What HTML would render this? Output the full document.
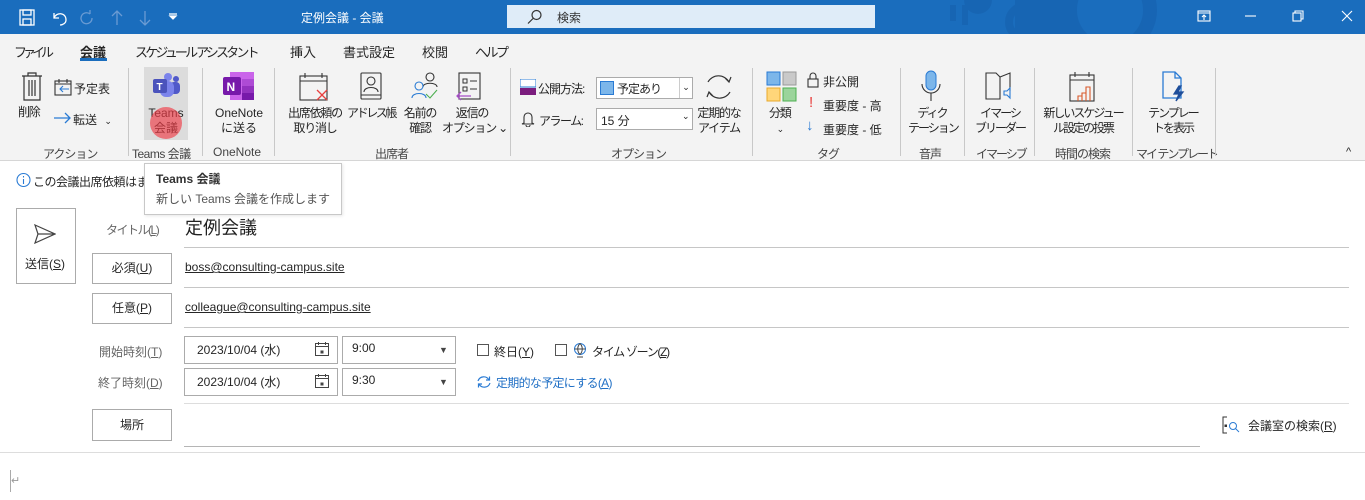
<!DOCTYPE html>
<html><head><meta charset="utf-8">
<style>
*{box-sizing:border-box;margin:0;padding:0}
body{width:1365px;height:500px;overflow:hidden;background:#fff;font-family:"Liberation Sans","Noto Sans CJK JP",sans-serif;color:#262626;font-size:12px;position:relative}
.a{position:absolute;white-space:nowrap}
#tb{left:0;top:0;width:1365px;height:34px;background:#1a6dbd}
#mb{left:0;top:34px;width:1365px;height:127px;background:#f3f3f3;border-bottom:1px solid #d6d6d6}
.menu{top:42px;font-size:13px;color:#262626}
.gl{top:145px;font-size:12px;color:#444;letter-spacing:-1px}
.sep{top:68px;width:1px;height:88px;background:#c8c8c8}
.lbl{font-size:12px;text-align:center;line-height:15px;color:#262626;letter-spacing:-1.2px}
.btn{border:1px solid #ababab;background:#fff;font-size:12px;text-align:center;color:#262626}
.ln{height:1px;background:#c6c6c6}
.f{color:#666;font-size:12px}
.box{border:1px solid #ababab;background:#fff}
u{text-decoration:underline}
</style></head><body>
<div id="tb" class="a"></div>
<svg class="a" style="left:900px;top:0" width="400" height="34"><g fill="#1763b0" opacity=".7"><rect x="50" y="5" width="6" height="16"/><rect x="62" y="5" width="6" height="20"/><rect x="115" y="0" width="60" height="34"/><circle cx="78" cy="0" r="14"/><circle cx="125" cy="22" r="16" fill="none" stroke="#1763b0" stroke-width="8"/><circle cx="210" cy="10" r="40" fill="none" stroke="#1763b0" stroke-width="14"/></g></svg>
<svg class="a" style="left:18px;top:8px" width="170" height="20" fill="none" stroke="#fff" stroke-width="1.3"><rect x="2" y="2" width="14" height="15"/><rect x="5" y="2" width="8" height="5"/><rect x="5" y="11" width="8" height="6"/><path d="M36 5v5h5M36 10c2-6 12-6 12 2c0 3-3 5-6 5"/><path d="M72 6a5.5 5.5 0 1 0 2 4M72 6l0-4" stroke="#6a9bd3"/><path d="M99 17V3M94 8l5-5l5 5M127 3v14M122 12l5 5l5-5" stroke="#6a9bd3"/><path d="M152 8h6l-3 3z" fill="#fff"/><path d="M151 6h8"/></svg>
<div class="a" style="left:301px;top:9px;color:#fff;font-size:12px">定例会議 - 会議</div>
<div class="a" style="left:507px;top:5px;width:368px;height:23px;background:#dfecf8"></div>
<svg class="a" style="left:527px;top:9px" width="16" height="16" fill="none" stroke="#333" stroke-width="1.2"><circle cx="9.5" cy="6" r="4.5"/><path d="M6 9.5L1 14.5"/></svg>
<div class="a" style="left:557px;top:9px;font-size:12px;color:#333">検索</div>
<svg class="a" style="left:1190px;top:8px" width="170" height="18" fill="none" stroke="#fff" stroke-width="1.1"><rect x="8" y="3" width="12" height="10"/><path d="M8 5h12M14 12V7M12 9l2-2l2 2"/><path d="M55 8h11"/><rect x="103" y="5" width="8" height="8"/><path d="M105 5V3h8v8h-2"/><path d="M152 3l10 10M162 3l-10 10"/></svg>
<div id="mb" class="a"></div>
<div class="a menu" style="left:14px;letter-spacing:-4px">ファイル</div>
<div class="a menu" style="left:80px;font-weight:bold">会議</div>
<div class="a" style="left:80px;top:58px;width:27px;height:3px;background:#1a6dbd"></div>
<div class="a menu" style="left:135px;letter-spacing:-2.8px">スケジュール アシスタント</div>
<div class="a menu" style="left:290px">挿入</div>
<div class="a menu" style="left:343px">書式設定</div>
<div class="a menu" style="left:422px">校閲</div>
<div class="a menu" style="left:475px;letter-spacing:-2.5px">ヘルプ</div>
<!-- action group -->
<svg class="a" style="left:20px;top:72px" width="24" height="30" fill="none" stroke="#333" stroke-width="1.2"><path d="M2 4h20M8 4V1h8v3M4 4v24h16V4M9 8v16M12 8v16M15 8v16"/></svg>
<div class="a lbl" style="left:18px;top:105px">削除</div>
<svg class="a" style="left:54px;top:79px" width="20" height="18" fill="none" stroke="#333" stroke-width="1.1"><rect x="1" y="2" width="16" height="14"/><path d="M1 5h16M5 0v4M13 0v4"/><path d="M15 10H6M9 7l-3 3l3 3" stroke="#2a7bd4"/></svg>
<div class="a" style="left:74px;top:80px;font-size:12px">予定表</div>
<svg class="a" style="left:53px;top:112px" width="20" height="12" fill="none" stroke="#2a7bd4" stroke-width="1.3"><path d="M1 6h16M12 1l5 5l-5 5"/></svg>
<div class="a" style="left:73px;top:111px;font-size:12px">転送 <span style="font-size:9px;margin-left:4px">⌄</span></div>
<div class="a gl" style="left:43px">アクション</div>
<div class="a sep" style="left:128px"></div>
<!-- teams -->
<div class="a" style="left:144px;top:67px;width:44px;height:73px;background:#dcdcdc"></div>
<svg class="a" style="left:151px;top:71px" width="30" height="28"><circle cx="17" cy="6" r="4" fill="#7b83eb"/><circle cx="25" cy="8" r="3" fill="#5059c9"/><rect x="19" y="11" width="10" height="12" rx="4" fill="#5059c9"/><rect x="9" y="10" width="14" height="16" rx="6" fill="#7b83eb"/><rect x="2" y="8" width="14" height="14" rx="2" fill="#4b53bc"/><text x="5.5" y="19" fill="#fff" font-size="10" font-weight="bold" font-family="Liberation Sans">T</text></svg>
<div class="a lbl" style="left:144px;top:106px;width:44px;letter-spacing:0">Teams<br>会議</div>
<div class="a" style="left:150px;top:107px;width:32px;height:32px;border-radius:50%;background:rgba(240,60,70,.65)"></div>
<div class="a gl" style="left:132px;letter-spacing:-.5px">Teams 会議</div>
<div class="a sep" style="left:202px"></div>
<!-- onenote -->
<svg class="a" style="left:222px;top:71px" width="34" height="30"><rect x="8" y="1" width="24" height="28" fill="#ca64ea"/><rect x="20" y="8" width="12" height="7" fill="#ae4bd5"/><rect x="20" y="15" width="12" height="7" fill="#9332bf"/><rect x="20" y="22" width="12" height="7" fill="#7719aa"/><rect x="1" y="6" width="18" height="18" rx="2" fill="#7719aa"/><text x="4.5" y="20" fill="#fff" font-size="12" font-weight="bold" font-family="Liberation Sans">N</text></svg>
<div class="a lbl" style="left:208px;top:106px;width:62px;letter-spacing:0">OneNote<br>に送る</div>
<div class="a gl" style="left:213px;letter-spacing:0">OneNote</div>
<div class="a sep" style="left:274px"></div>
<!-- attendees -->
<svg class="a" style="left:299px;top:72px" width="220" height="30" fill="none" stroke="#333" stroke-width="1.1"><rect x="1" y="4" width="27" height="24"/><path d="M1 9h27M6 1v5M23 1v5"/><path d="M18 18l10 10M28 18L18 28" stroke="#e8403e" stroke-width="1.3"/><rect x="62" y="1" width="20" height="26" rx="1"/><path d="M62 23h20"/><circle cx="72" cy="9" r="4"/><path d="M65 20c0-6 14-6 14 0"/><circle cx="131" cy="5" r="4"/><path d="M124 15c0-5 14-5 14 0"/><circle cx="120" cy="14" r="4" stroke="#2a7bd4"/><path d="M113 26c0-6 14-6 14 0" stroke="#2a7bd4"/><path d="M127 22l4 4l7-8" stroke="#4caf50"/><rect x="160" y="1" width="21" height="26"/><path d="M164 7h4v4h-4zM164 15h4v4h-4zM171 9h7M171 17h7" stroke-width="1"/><path d="M172 24h-14M162 20l-4 4l4 4" stroke="#a64fc7" stroke-width="1.3"/></svg>
<div class="a lbl" style="left:285px;top:106px;width:60px">出席依頼の<br>取り消し</div>
<div class="a lbl" style="left:347px;top:106px;width:48px;letter-spacing:-2.4px">アドレス帳</div>
<div class="a lbl" style="left:403px;top:106px;width:34px">名前の<br>確認</div>
<div class="a lbl" style="left:442px;top:106px;width:60px">返信の<br>オプション ⌄</div>
<div class="a gl" style="left:375px">出席者</div>
<div class="a sep" style="left:510px"></div>
<!-- options -->
<svg class="a" style="left:520px;top:79px" width="16" height="16"><rect x="0" y="0" width="16" height="8" fill="#fff" stroke="#2a7bd4"/><rect x="0" y="9" width="16" height="7" fill="#7b1d7e"/></svg>
<div class="a" style="left:538px;top:80px;letter-spacing:-1px">公開方法:</div>
<div class="a box" style="left:596px;top:77px;width:97px;height:22px"></div>
<div class="a" style="left:600px;top:81px;width:14px;height:14px;background:#7cb6ea;border:1px solid #2a7bd4"></div>
<div class="a" style="left:617px;top:80px;letter-spacing:-1px">予定あり</div>
<div class="a" style="left:679px;top:78px;height:20px;border-left:1px solid #ccc;width:13px;font-size:9px;text-align:center;line-height:18px">⌄</div>
<svg class="a" style="left:521px;top:111px" width="14" height="16" fill="none" stroke="#333" stroke-width="1.1"><path d="M3 12V6a4 4 0 0 1 8 0v6l2 1H1zM5 14a2 2 0 0 0 4 0"/></svg>
<div class="a" style="left:539px;top:112px;letter-spacing:-1.5px">アラーム:</div>
<div class="a box" style="left:596px;top:108px;width:97px;height:22px"></div>
<div class="a" style="left:601px;top:112px">15 分</div>
<div class="a" style="left:682px;top:111px;font-size:9px">⌄</div>
<svg class="a" style="left:703px;top:72px" width="32" height="30" fill="none" stroke="#333" stroke-width="1.2"><path d="M26 10A12 12 0 0 0 5 10M6 20a12 12 0 0 0 21 0M22 6l4 4l2-5M10 24l-4-4l-2 5"/></svg>
<div class="a lbl" style="left:694px;top:106px;width:50px">定期的な<br>アイテム</div>
<div class="a gl" style="left:611px">オプション</div>
<div class="a sep" style="left:752px"></div>
<!-- tags -->
<svg class="a" style="left:766px;top:71px" width="32" height="32"><rect x="1" y="1" width="13" height="13" fill="#7cb6ea" stroke="#2a7bd4"/><rect x="17" y="1" width="13" height="13" fill="#c9c9c9" stroke="#999"/><rect x="1" y="17" width="13" height="13" fill="#ffd67a" stroke="#e8a92c"/><rect x="17" y="17" width="13" height="13" fill="#9bd49b" stroke="#4caf50"/></svg>
<div class="a lbl" style="left:769px;top:106px">分類<br><span style="font-size:9px">⌄</span></div>
<svg class="a" style="left:807px;top:72px" width="12" height="16" fill="none" stroke="#333" stroke-width="1.1"><rect x="1" y="7" width="10" height="8"/><path d="M3 7V4a3 3 0 0 1 6 0v3"/></svg>
<div class="a" style="left:823px;top:73px">非公開</div>
<div class="a" style="left:809px;top:94px;color:#e8403e;font-size:15px">!</div>
<div class="a" style="left:823px;top:97px">重要度 - 高</div>
<div class="a" style="left:806px;top:117px;color:#2a7bd4;font-size:15px">↓</div>
<div class="a" style="left:823px;top:121px">重要度 - 低</div>
<div class="a gl" style="left:817px">タグ</div>
<div class="a sep" style="left:900px"></div>
<svg class="a" style="left:920px;top:70px" width="22" height="32" fill="none"><rect x="6" y="1" width="10" height="19" rx="5" fill="#7cb6ea" stroke="#2a7bd4"/><path d="M2 14a9 9 0 0 0 18 0M11 23v8" stroke="#333" stroke-width="1.1"/></svg>
<div class="a lbl" style="left:908px;top:106px;width:48px;letter-spacing:-2px">ディク<br>テーション</div>
<div class="a gl" style="left:919px">音声</div>
<div class="a sep" style="left:964px"></div>
<svg class="a" style="left:984px;top:71px" width="32" height="30" fill="none" stroke="#333" stroke-width="1.1"><path d="M2 2h10l4 4v22H2zM16 6l10-4v18"/><path d="M20 20h3l3-3v10l-3-3h-3z" stroke="#2a7bd4"/></svg>
<div class="a lbl" style="left:974px;top:106px;width:52px;letter-spacing:-2px">イマーシ<br>ブリーダー</div>
<div class="a gl" style="left:976px;letter-spacing:-2px">イマーシブ</div>
<div class="a sep" style="left:1034px"></div>
<svg class="a" style="left:1068px;top:71px" width="30" height="32" fill="none" stroke="#333" stroke-width="1.1"><rect x="2" y="4" width="24" height="26"/><path d="M2 9h24M7 1v5M21 1v5"/><path d="M14 30V22h4v8M18 30V16h4v14M10 30v-5h4" stroke="#d8592b"/></svg>
<div class="a lbl" style="left:1040px;top:106px;width:86px;letter-spacing:-2px">新しいスケジュー<br>ル設定の投票</div>
<div class="a gl" style="left:1055px">時間の検索</div>
<div class="a sep" style="left:1132px"></div>
<svg class="a" style="left:1161px;top:70px" width="28" height="32" fill="none" stroke="#2a7bd4" stroke-width="1.3"><path d="M2 2h12l6 6v20H2zM14 2v6h6"/><path d="M18 16l-5 8h5l-3 7l7-9h-5l3-6z" fill="#1f4e9a" stroke="#1f4e9a"/></svg>
<div class="a lbl" style="left:1148px;top:106px;width:50px;letter-spacing:-2px">テンプレー<br>トを表示</div>
<div class="a gl" style="left:1136px;letter-spacing:-2px">マイ テンプレート</div>
<div class="a sep" style="left:1215px"></div>
<div class="a" style="left:1346px;top:146px;font-size:11px">^</div>
<!-- content -->
<svg class="a" style="left:16px;top:172px" width="16" height="16" fill="none" stroke="#2a7bd4" stroke-width="1.1"><circle cx="7.5" cy="8" r="6.5"/><path d="M7.5 7v5M7.5 4v1.5"/></svg>
<div class="a" style="left:33px;top:173px;font-size:12px;letter-spacing:-.5px">この会議出席依頼はま</div>
<div class="a" style="left:144px;top:163px;width:198px;height:52px;background:#fff;border:1px solid #c8c8c8;box-shadow:1px 1px 3px rgba(0,0,0,.1)"></div>
<div class="a" style="left:156px;top:170px;font-size:12px;font-weight:bold;color:#333">Teams 会議</div>
<div class="a" style="left:156px;top:190px;font-size:12px;color:#555">新しい Teams 会議を作成します</div>
<div class="a btn" style="left:16px;top:208px;width:60px;height:76px"></div>
<svg class="a" style="left:34px;top:224px" width="22" height="20" fill="none" stroke="#444" stroke-width="1.2"><path d="M1 1l20 9L1 19l3-9zM4 10h17"/></svg>
<div class="a" style="left:25px;top:255px">送信(<u>S</u>)</div>
<div class="a f" style="left:106px;top:221px;letter-spacing:-1.5px">タイトル(<u>L</u>)</div>
<div class="a" style="left:185px;top:214px;font-size:18px;color:#222">定例会議</div>
<div class="a ln" style="left:184px;top:247px;width:1165px"></div>
<div class="a btn" style="left:92px;top:253px;width:80px;height:31px;line-height:29px">必須(<u>U</u>)</div>
<div class="a" style="left:185px;top:260px;font-size:12px"><u>boss@consulting-campus.site</u></div>
<div class="a ln" style="left:184px;top:287px;width:1165px"></div>
<div class="a btn" style="left:92px;top:293px;width:80px;height:31px;line-height:29px">任意(<u>P</u>)</div>
<div class="a" style="left:185px;top:300px;font-size:12px"><u>colleague@consulting-campus.site</u></div>
<div class="a ln" style="left:184px;top:327px;width:1165px"></div>
<div class="a f" style="left:99px;top:343px">開始時刻(<u>T</u>)</div>
<div class="a box" style="left:184px;top:336px;width:154px;height:28px"></div>
<div class="a" style="left:197px;top:341px">2023/10/04 (水)</div>
<svg class="a" style="left:314px;top:341px" width="16" height="16" fill="none" stroke="#444" stroke-width="1"><rect x="1.5" y="2.5" width="13" height="12"/><path d="M1.5 5.5h13M4.5 1v3M11.5 1v3"/><rect x="7" y="10" width="2" height="2" fill="#444"/></svg>
<div class="a box" style="left:342px;top:336px;width:114px;height:28px"></div>
<div class="a" style="left:352px;top:341px">9:00</div>
<div class="a" style="left:439px;top:345px;font-size:9px;color:#444">▼</div>
<div class="a" style="left:477px;top:344px;width:12px;height:12px;border:1px solid #555"></div>
<div class="a" style="left:494px;top:343px">終日(<u>Y</u>)</div>
<div class="a" style="left:555px;top:344px;width:12px;height:12px;border:1px solid #555"></div>
<svg class="a" style="left:573px;top:342px" width="14" height="16" fill="none" stroke="#2a7bd4"><circle cx="7" cy="7" r="5.5"/><path d="M1.5 7h11M7 1.5c-3 3-3 8 0 11M7 1.5c3 3 3 8 0 11M4 15h6" stroke="#444"/></svg>
<div class="a" style="left:592px;top:343px;letter-spacing:-1.3px">タイム ゾーン(<u>Z</u>)</div>
<div class="a f" style="left:98px;top:374px">終了時刻(<u>D</u>)</div>
<div class="a box" style="left:184px;top:368px;width:154px;height:28px"></div>
<div class="a" style="left:197px;top:373px">2023/10/04 (水)</div>
<svg class="a" style="left:314px;top:373px" width="16" height="16" fill="none" stroke="#444" stroke-width="1"><rect x="1.5" y="2.5" width="13" height="12"/><path d="M1.5 5.5h13M4.5 1v3M11.5 1v3"/><rect x="7" y="10" width="2" height="2" fill="#444"/></svg>
<div class="a box" style="left:342px;top:368px;width:114px;height:28px"></div>
<div class="a" style="left:352px;top:373px">9:30</div>
<div class="a" style="left:439px;top:377px;font-size:9px;color:#444">▼</div>
<svg class="a" style="left:476px;top:374px" width="16" height="16" fill="none" stroke="#2a7bd4" stroke-width="1.2"><path d="M13 6A6 6 0 0 0 2 7M3 10a6 6 0 0 0 11-1M10 6h3.5V2.5M6 10H2.5v3.5"/></svg>
<div class="a" style="left:496px;top:374px;color:#1f6fc5;letter-spacing:-.7px">定期的な予定にする(<u>A</u>)</div>
<div class="a" style="left:184px;top:403px;width:1165px;height:1px;background:#ddd"></div>
<div class="a btn" style="left:92px;top:409px;width:80px;height:32px;line-height:30px">場所</div>
<div class="a ln" style="left:184px;top:446px;width:1016px;background:#b5b5b5"></div>
<svg class="a" style="left:1222px;top:416px" width="18" height="18" fill="none" stroke="#333" stroke-width="1"><path d="M5 1H1v16h4"/><circle cx="11" cy="10" r="3.5" stroke="#2a7bd4"/><path d="M13.5 12.5L17 16" stroke="#2a7bd4"/><rect x="3" y="9" width="1.5" height="1.5" fill="#333"/></svg>
<div class="a" style="left:1248px;top:417px">会議室の検索(<u>R</u>)</div>
<div class="a" style="left:0;top:452px;width:1365px;height:1px;background:#ddd"></div>
<div class="a" style="left:10px;top:470px;width:1px;height:22px;background:#aaa"></div>
<div class="a" style="left:11px;top:474px;font-size:11px;color:#999">↵</div>
</body></html>
